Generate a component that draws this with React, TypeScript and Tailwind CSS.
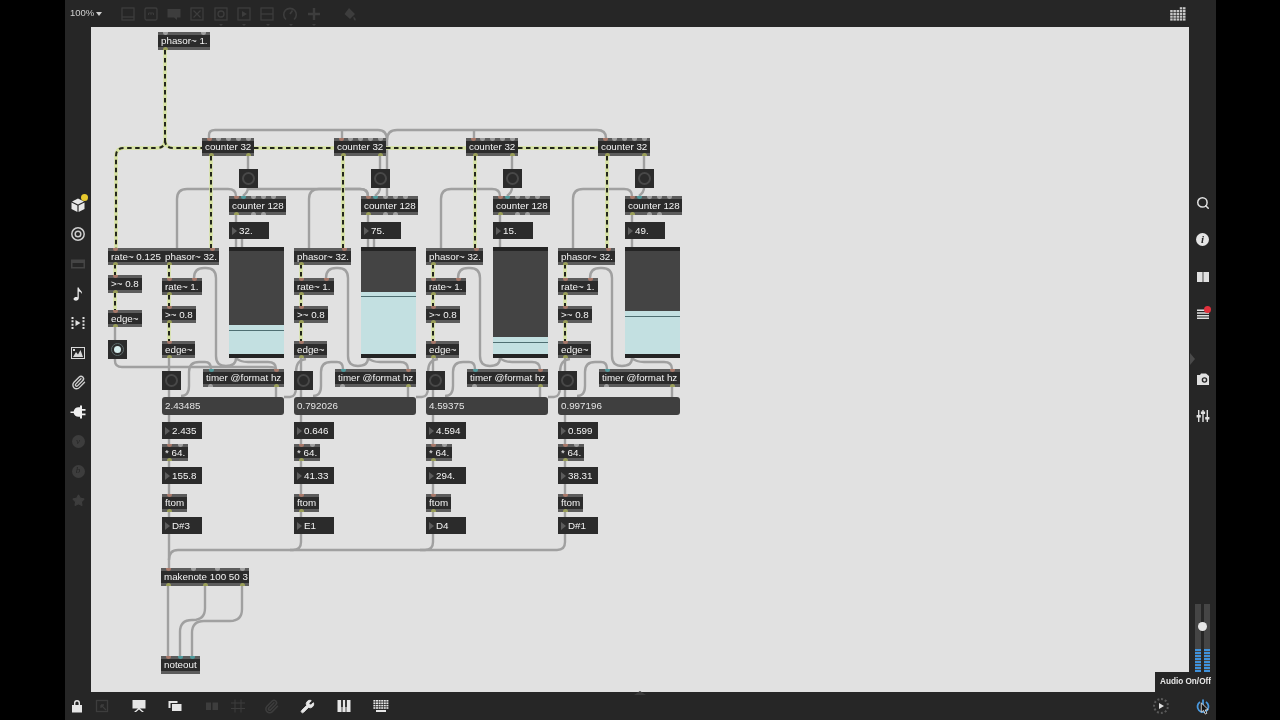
import { Paperclip, Search, Star, Wrench } from "lucide-react";
import type { ReactNode } from "react";

type Port = [number, string];

const IN = "#a9796a";
const OUT = "#9a9f58";
const TEAL = "#4f9a9c";
const BUMP = "#a0a0a0";

const COLS = [0, 1, 2, 3];
const STEP = 132;

// canvas starts at 91,27 in the page; data below is in page coordinates
const place = (x: number, y: number, w: number, h: number) => ({
  left: x - 91,
  top: y - 27,
  width: w,
  height: h,
});

function Obj({
  x,
  y,
  w,
  text,
  h = 18,
  top = [],
  bottom = [],
}: {
  x: number;
  y: number;
  w: number;
  text: string;
  h?: number;
  top?: Port[];
  bottom?: Port[];
}) {
  return (
    <div className="absolute flex flex-col bg-[#2b2b2b]" style={place(x, y, w, h)}>
      <div className="h-[3px] bg-[#5c5c5c]" />
      <div className="flex flex-1 items-center overflow-hidden whitespace-nowrap pl-[3px] text-[9.8px] leading-none text-[#f4f4f4]">
        {text}
      </div>
      <div className="h-[3px] bg-[#5c5c5c]" />
      {top.map(([px, c]) => (
        <span
          key={px}
          className="absolute top-0 h-[3px] w-[5px] rounded-b-full"
          style={{ left: px - 2, background: c }}
        />
      ))}
      {bottom.map(([px, c]) => (
        <span
          key={px}
          className="absolute bottom-0 h-[3px] w-[5px] rounded-t-full"
          style={{ left: px - 2, background: c }}
        />
      ))}
    </div>
  );
}

function NumBox({ x, y, w = 40, text }: { x: number; y: number; w?: number; text: string }) {
  return (
    <div
      className="absolute flex items-center gap-[2px] bg-[#2b2b2b] pl-[3px] text-[9.8px] leading-none text-[#f4f4f4]"
      style={place(x, y, w, 17)}
    >
      <span className="h-0 w-0 border-y-[4px] border-l-[5px] border-y-transparent border-l-[#5c5c5c]" />
      {text}
    </div>
  );
}

function Btn({ x, y, on = false }: { x: number; y: number; on?: boolean }) {
  return (
    <div className="absolute flex items-center justify-center bg-[#2b2b2b]" style={place(x, y, 19, 19)}>
      <div
        className={
          on
            ? "flex h-[13px] w-[13px] items-center justify-center rounded-full border border-[#5d6b6b]"
            : "h-[13px] w-[13px] rounded-full border-2 border-[#484848]"
        }
      >
        {on && <div className="h-[7px] w-[7px] rounded-full bg-[#d5ecec]" />}
      </div>
    </div>
  );
}

function Slider({ x, fill, line }: { x: number; fill: number; line: number }) {
  return (
    <div className="absolute flex flex-col bg-[#444444]" style={place(x, 247, 55, 111)}>
      <div className="h-[4px] bg-[#242424]" />
      <div className="flex-1" />
      <div className="relative bg-[#c3e0e1]" style={{ height: 354 - fill }}>
        <div className="absolute inset-x-0 h-px bg-[#4f6f72]" style={{ top: line - fill }} />
      </div>
      <div className="h-[4px] bg-[#242424]" />
    </div>
  );
}

const grayWires = [
  "M209 138 V135 Q209 130 215 130 H378 Q387 130 387 140 V196",
  "M342 138 V130",
  "M387 140 Q387 130 397 130 H597 Q606 130 606 138",
  "M474 138 V130",
  "M248 188 V189 H360 Q368 189 368 196",
  "M115 327 V340",
  "M115 359 V361 Q115 367 122 367 H268 Q276 367 276 369",
  "M169 534 V568",
  "M301 534 V542 Q301 550 293 550 H178 Q169 550 169 560",
  "M433 534 V542 Q433 550 425 550 H290",
  "M565 534 V542 Q565 550 557 550 H420",
  "M168 585 V656",
  "M205 585 V608 Q205 620 193 620 H192 Q180 620 180 632 V656",
  "M242 585 V609 Q242 621 230 621 H204 Q192 621 192 633 V656",
];

const columnGray = [
  "M177 248 V199 Q177 189 187 189 H228 Q236 189 236 196",
  "M248 156 V169",
  "M248 188 Q248 192 243 196",
  "M236 213 V247",
  "M194 278 Q194 268 204 268 H206 Q216 268 216 278 V356 Q216 366 226 366 Q236 366 236 358",
  "M236 358 Q240 362 248 362 H268 Q276 362 276 369",
  "M181 396 Q189 396 189 386 V372 Q189 362 199 362 H205 Q211 362 211 369",
  "M169 341 V534",
  "M276 387 V398",
];

const signalWires = [
  "M165 50 V140 Q165 148 157 148 H124 Q116 148 116 156 V248",
  "M165 140 Q165 148 173 148 H202",
  "M254 148 H334",
  "M386 148 H466",
  "M518 148 H598",
  "M115 264 V275",
  "M115 293 V310",
];

const columnSignal = ["M211 156 V248", "M169 264 V278", "M169 295 V306", "M169 323 V341"];

function Wires() {
  return (
    <svg className="absolute inset-0 h-full w-full" viewBox="91 27 1098 665" fill="none">
      <g stroke="#a0a0a0" strokeWidth="2.4">
        {grayWires.map((d) => (
          <path key={d} d={d} />
        ))}
        {COLS.map((i) => (
          <g key={i} transform={`translate(${i * STEP} 0)`}>
            {columnGray.map((d) => (
              <path key={d} d={d} />
            ))}
            {i < 2 && <path d="M242 239 V247" />}
            {i < 3 && <path d="M284 397 H290 Q296 397 296 387 V372 Q296 360 306 359" />}
          </g>
        ))}
      </g>
      {[
        { stroke: "#d6e2a0", width: 3.4, dash: undefined },
        { stroke: "#23261b", width: 2, dash: "4.5 3.5" },
      ].map((s) => (
        <g key={s.stroke} stroke={s.stroke} strokeWidth={s.width} strokeDasharray={s.dash}>
          {signalWires.map((d) => (
            <path key={d} d={d} />
          ))}
          {COLS.map((i) => (
            <g key={i} transform={`translate(${i * STEP} 0)`}>
              {columnSignal.map((d) => (
                <path key={d} d={d} />
              ))}
            </g>
          ))}
        </g>
      ))}
    </svg>
  );
}

const counter128Bumps: Port[] = [
  [7, IN],
  [14, TEAL],
  [24, BUMP],
  [34, BUMP],
  [44, BUMP],
];
const counter32Top: Port[] = [
  [7, IN],
  [16, BUMP],
  [26, BUMP],
  [36, BUMP],
  [46, BUMP],
];

const colData = [
  { nums: ["32.", "2.435", "155.8", "D#3"], msg: "2.43485", count: "32.", fill: 325, line: 330 },
  { nums: ["75.", "0.646", "41.33", "E1"], msg: "0.792026", count: "75.", fill: 292, line: 296 },
  { nums: ["15.", "4.594", "294.", "D4"], msg: "4.59375", count: "15.", fill: 337, line: 342 },
  { nums: ["49.", "0.599", "38.31", "D#1"], msg: "0.997196", count: "49.", fill: 311, line: 316 },
];

function Column({ i }: { i: number }) {
  const d = colData[i];
  const o = i * STEP;
  return (
    <>
      <Obj
        x={202 + o}
        y={138}
        w={52}
        text="counter 32"
        top={counter32Top}
        bottom={[
          [9, OUT],
          [46, OUT],
        ]}
      />
      <Btn x={239 + o} y={169} />
      <Obj
        x={229 + o}
        y={196}
        w={57}
        h={19}
        text="counter 128"
        top={counter128Bumps}
        bottom={[
          [7, OUT],
          [24, BUMP],
          [34, BUMP],
        ]}
      />
      <NumBox x={229 + o} y={222} text={d.count} />
      <Slider x={229 + o} fill={d.fill} line={d.line} />
      <Obj x={162 + o} y={248} w={57} h={17} text="phasor~ 32." top={[[50, IN]]} bottom={[[7, OUT]]} />
      <Obj
        x={162 + o}
        y={278}
        w={40}
        h={17}
        text="rate~ 1."
        top={[
          [7, IN],
          [32, IN],
        ]}
        bottom={[[7, OUT]]}
      />
      <Obj x={162 + o} y={306} w={34} h={17} text=">~ 0.8" top={[[7, IN]]} bottom={[[7, OUT]]} />
      <Obj x={162 + o} y={341} w={33} h={17} text="edge~" top={[[7, IN]]} bottom={[[7, OUT]]} />
      <Btn x={162 + o} y={371} />
      <Obj
        x={203 + o}
        y={369}
        w={81}
        text="timer @format hz"
        top={[
          [8, TEAL],
          [73, IN],
        ]}
        bottom={[
          [7, BUMP],
          [73, OUT],
        ]}
      />
      <div
        className="absolute flex items-center rounded-[3px] bg-[#3f3f3f] pl-[3px] text-[9.8px] leading-none text-[#e4e4e4]"
        style={place(162 + o, 397, 122, 18)}
      >
        {d.msg}
      </div>
      <NumBox x={162 + o} y={422} text={d.nums[1]} />
      <Obj x={162 + o} y={444} w={26} h={17} text="* 64." top={[[7, IN], [18, BUMP]]} bottom={[[7, OUT]]} />
      <NumBox x={162 + o} y={467} text={d.nums[2]} />
      <Obj x={162 + o} y={494} w={25} text="ftom" top={[[7, IN]]} bottom={[[7, OUT]]} />
      <NumBox x={162 + o} y={517} text={d.nums[3]} />
    </>
  );
}

function Patch() {
  return (
    <div className="relative flex-1 overflow-hidden bg-[#e1e1e1] font-['Liberation_Sans',sans-serif]">
      <Wires />
      <Obj
        x={158}
        y={32}
        w={52}
        text="phasor~ 1."
        top={[
          [7, BUMP],
          [45, BUMP],
        ]}
        bottom={[[7, OUT]]}
      />
      <Obj x={108} y={248} w={54} h={17} text="rate~ 0.125" top={[[7, IN]]} bottom={[[7, OUT]]} />
      <Obj x={108} y={275} w={34} h={18} text=">~ 0.8" top={[[7, IN]]} bottom={[[7, OUT]]} />
      <Obj x={108} y={310} w={34} h={17} text="edge~" top={[[7, IN]]} bottom={[[7, OUT]]} />
      <Btn x={108} y={340} on />
      {COLS.map((i) => (
        <Column key={i} i={i} />
      ))}
      <Obj
        x={161}
        y={568}
        w={88}
        text="makenote 100 50 3"
        top={[
          [7, IN],
          [32, BUMP],
          [56, BUMP],
          [81, BUMP],
        ]}
        bottom={[
          [7, OUT],
          [44, OUT],
          [81, OUT],
        ]}
      />
      <Obj
        x={161}
        y={656}
        w={39}
        text="noteout"
        top={[
          [7, IN],
          [19, TEAL],
          [31, TEAL],
        ]}
      />
    </div>
  );
}

const Ico = ({ children, className = "" }: { children: ReactNode; className?: string }) => (
  <svg viewBox="0 0 16 16" className={`h-4 w-4 ${className}`} fill="currentColor">
    {children}
  </svg>
);

const dimStroke = { fill: "none", stroke: "currentColor", strokeWidth: 1.3 };

const topIcons = [
  <g {...dimStroke}>
    <rect x="2" y="2" width="12" height="12" />
    <path d="M2 11 H14" />
  </g>,
  <g {...dimStroke}>
    <rect x="2" y="2" width="12" height="12" rx="1.5" />
    <path d="M5.5 9 V7 M8 9 V7 M10.5 9 V7 M5.5 7 H10.5" strokeWidth="0.9" />
  </g>,
  <path d="M1.5 3 H14.5 V11.5 H11 V14 L8 11.5 H1.5 Z" />,
  <g {...dimStroke}>
    <rect x="2" y="2" width="12" height="12" />
    <path d="M4.5 4.5 L11.5 11.5 M11.5 4.5 L4.5 11.5" />
  </g>,
  <g {...dimStroke}>
    <rect x="2" y="2" width="12" height="12" />
    <circle cx="8" cy="8" r="3" />
  </g>,
  <g>
    <rect x="2" y="2" width="12" height="12" {...dimStroke} />
    <path d="M6 5 L11 8 L6 11 Z" />
  </g>,
  <g {...dimStroke}>
    <rect x="2" y="2" width="12" height="12" />
    <path d="M2 8 H14" />
  </g>,
  <g {...dimStroke} strokeWidth="1.6">
    <path d="M4 13.5 A6.3 6.3 0 1 1 12 13.5" />
    <path d="M8 8 L10.5 4.5" />
  </g>,
  <path d="M6.8 2 H9.2 V6.8 H14 V9.2 H9.2 V14 H6.8 V9.2 H2 V6.8 H6.8 Z" />,
];

function TopBar() {
  return (
    <div className="flex h-[27px] items-center bg-[#262626] pl-[5px] font-['Liberation_Sans',sans-serif]">
      <span className="w-[26px] text-[9.5px] text-[#d0d0d0]">100%</span>
      <span className="h-0 w-0 border-x-[3px] border-t-[4px] border-x-transparent border-t-[#d0d0d0]" />
      <div className="ml-[14px] flex text-[#3d3d3d]">
        {topIcons.map((icon, n) => (
          <div key={n} className="relative flex w-[23.25px] justify-center">
            <Ico>{icon}</Ico>
            {n >= 4 && n <= 8 && (
              <span className="absolute left-[10px] top-[18px] h-0 w-0 border-x-[2px] border-t-[2px] border-x-transparent border-t-[#3d3d3d]" />
            )}
          </div>
        ))}
      </div>
      <div className="ml-[17px] text-[#3d3d3d]">
        <Ico>
          <path d="M7 2 L13 8 L8 13 L2.5 8 Z M11.5 10.5 C13 12 14.5 13 13.5 14.5 C12.5 15 11 13 11.5 10.5 Z" />
        </Ico>
      </div>
      <div className="ml-auto mr-[30px] text-[#c8c8c8]">
        <svg viewBox="0 0 16 14" className="h-[14px] w-4" fill="currentColor">
          {[0, 1, 2, 3, 4].map((r) =>
            [0, 1, 2, 3, 4].map((c) =>
              r < 1 && c < 3 ? null : (
                <rect key={`${r}-${c}`} x={c * 3.2 + 0.2} y={r * 2.8 + 0.2} width="2.5" height="2.2" />
              ),
            ),
          )}
        </svg>
      </div>
    </div>
  );
}

const leftIcons = [
  <div className="relative text-[#e8e8e8]">
    <Ico>
      <path d="M8 1.5 L14 4.5 L8 7.5 L2 4.5 Z M1.5 5.5 L7.4 8.5 V15 L1.5 12 Z M14.5 5.5 L8.6 8.5 V15 L14.5 12 Z" />
    </Ico>
    <span className="absolute -right-[2px] -top-[3px] h-[7px] w-[7px] rounded-full bg-[#e8c92e]" />
  </div>,
  <div className="text-[#cfcfcf]">
    <Ico>
      <g {...dimStroke} strokeWidth="1.5">
        <circle cx="8" cy="8" r="6.2" />
        <circle cx="8" cy="8" r="2.8" />
      </g>
    </Ico>
  </div>,
  <div className="text-[#444444]">
    <Ico>
      <path d="M1 3.5 H15 V12.5 H1 Z M2.5 7 V11 H13.5 V7 Z" fillRule="evenodd" />
    </Ico>
  </div>,
  <div className="text-[#e8e8e8]">
    <Ico>
      <path d="M7.5 1.5 H8.8 C9 4 12.5 4.5 12 8 C11.3 6.5 10 5.8 8.8 5.6 V12 C8.8 14 6.8 15 5 14.6 C3.3 14.2 3 12.4 4.5 11.5 C5.5 10.9 6.6 10.9 7.5 11.3 Z" />
    </Ico>
  </div>,
  <div className="text-[#e0e0e0]">
    <Ico>
      <path d="M1.5 2 H3.5 V4 H1.5 Z M1.5 5.3 H3.5 V7.3 H1.5 Z M1.5 8.7 H3.5 V10.7 H1.5 Z M1.5 12 H3.5 V14 H1.5 Z M12.5 2 H14.5 V4 H12.5 Z M12.5 5.3 H14.5 V7.3 H12.5 Z M12.5 8.7 H14.5 V10.7 H12.5 Z M12.5 12 H14.5 V14 H12.5 Z M5.5 5 L10.5 8 L5.5 11 Z" />
    </Ico>
  </div>,
  <div className="text-[#d8d8d8]">
    <Ico>
      <path
        d="M1 2 H15 V14 H1 Z M2 3 V13 H14 V3 Z"
        fillRule="evenodd"
      />
      <path d="M3 12 L6 7 L8 9.5 L10.5 5 L13 12 Z M3 4 H5 V6 H3 Z" />
    </Ico>
  </div>,
  <div className="text-[#d0d0d0]">
    <Paperclip size={15} strokeWidth={2.2} />
  </div>,
  <div className="text-[#f0f0f0]">
    <Ico>
      <path d="M0.5 7.4 H3.6 C4.2 4.8 6 3.2 8.5 3.2 H10 V1.5 H12 V5 H15.5 V6.8 H12 V9.4 H15.5 V11.2 H12 V14.5 H10 V12.8 H8.5 C6 12.8 4.2 11.2 3.6 9 H0.5 Z" />
    </Ico>
  </div>,
  <div className="flex h-[13px] w-[13px] items-center justify-center rounded-full bg-[#3d3d3d] font-['Liberation_Serif',serif] text-[9px] italic text-[#262626]">
    v
  </div>,
  <div className="flex h-[13px] w-[13px] items-center justify-center rounded-full bg-[#3d3d3d] font-['Liberation_Serif',serif] text-[9px] italic text-[#262626]">
    b
  </div>,
  <Star size={13} fill="#3d3d3d" stroke="#3d3d3d" />,
];

function LeftBar() {
  return (
    <div className="flex w-[26px] flex-col items-center bg-[#262626] pt-[163px]">
      {leftIcons.map((icon, n) => (
        <div key={n} className="flex h-[29.6px] items-center justify-center">
          {icon}
        </div>
      ))}
    </div>
  );
}

function RightBar() {
  const row = "flex h-[37px] items-center justify-center text-[#e0e0e0]";
  return (
    <div className="flex w-[27px] flex-col items-center bg-[#262626] pt-[157px]">
      <div className={row}>
        <Search size={14} strokeWidth={2.6} />
      </div>
      <div className={row}>
        <div className="flex h-[13px] w-[13px] items-center justify-center rounded-full bg-[#e4e4e4] font-['Liberation_Serif',serif] text-[11px] font-bold italic text-[#262626]">
          i
        </div>
      </div>
      <div className={row}>
        <Ico>
          <path d="M2 3 H7.6 V13 H2 Z M8.4 3 H14 V13 H8.4 Z" />
        </Ico>
      </div>
      <div className={`${row} relative`}>
        <Ico>
          <path d="M2 3.5 H14 V5 H2 Z M2 6.2 H14 V7.7 H2 Z M2 8.9 H14 V10.4 H2 Z M2 11.6 H14 V13.1 H2 Z" />
        </Ico>
        <span className="absolute left-[9px] top-[11px] h-[7px] w-[7px] rounded-full bg-[#e2303c]" />
      </div>
      <div className={`${row} mt-[28px]`}>
        <Ico>
          <path
            d="M2 4 H5 L6 2.5 H11 L14 5 V14 H2 Z M9.5 6.2 A2.8 2.8 0 1 0 9.5 11.8 A2.8 2.8 0 1 0 9.5 6.2 Z"
            fillRule="evenodd"
          />
          <circle cx="9.5" cy="9" r="1.4" />
        </Ico>
      </div>
      <div className={`${row} h-[36px]`}>
        <Ico>
          <path d="M3 2 H4.4 V7 H5.8 V9.5 H4.4 V14 H3 V9.5 H1.6 V7 H3 Z M7.3 2 H8.7 V3.5 H10.1 V6 H8.7 V14 H7.3 V6 H5.9 V3.5 H7.3 Z M11.6 2 H13 V9 H14.4 V11.5 H13 V14 H11.6 V11.5 H10.2 V9 H11.6 Z" />
        </Ico>
      </div>
      <div className="flex-1" />
      <Meter />
    </div>
  );
}

function Meter() {
  const segs = [0, 1, 2, 3, 4, 5, 6, 7];
  return (
    <div className="relative mb-[20px] flex h-[68px] gap-[3px]">
      {[0, 1].map((c) => (
        <div key={c} className="flex w-[6px] flex-col bg-[#454545]">
          <div className="flex-1" />
          <div className="flex flex-col gap-px">
            {segs.map((s) => (
              <div key={s} className="h-[2px] bg-[#3f92dc]" />
            ))}
          </div>
        </div>
      ))}
      <span className="absolute left-[3px] top-[18px] h-[9px] w-[9px] rounded-full bg-[#e6e6e6]" />
    </div>
  );
}

function BottomBar() {
  const lit = "text-[#e6e6e6]";
  const dim = "text-[#3d3d3d]";
  return (
    <div className="flex h-[28px] items-center bg-[#262626] pl-1">
      <div className={lit}>
        <Ico>
          <path
            d="M5 7 V5 A3 3 0 0 1 11 5 V7 H13 V14.5 H3 V7 Z M6.4 7 H9.6 V5 A1.6 1.6 0 0 0 6.4 5 Z"
            fillRule="evenodd"
          />
        </Ico>
      </div>
      <div className={`ml-[9px] ${dim}`}>
        <Ico>
          <g {...dimStroke}>
            <rect x="2.5" y="2.5" width="11" height="11" />
            <path d="M7 7 L12 12 M7 7 H10 M7 7 V10" />
          </g>
        </Ico>
      </div>
      <div className={`ml-[21px] ${lit}`}>
        <Ico>
          <path d="M1.5 2 H14.5 V10.5 H9 L13 14 H11 L8 11.5 L5 14 H3 L7 10.5 H1.5 Z" />
        </Ico>
      </div>
      <div className={`ml-[20px] ${lit}`}>
        <Ico>
          <path d="M1.5 3 H10.5 V5 H3.5 V10 H1.5 Z M5 6 H14.5 V13 H5 Z" />
        </Ico>
      </div>
      <div className={`ml-[21px] ${dim}`}>
        <Ico>
          <path d="M2 4.5 H7 V12 H2 Z M8.5 4.5 H14 V12 H8.5 Z" />
        </Ico>
      </div>
      <div className={`ml-[10px] ${dim}`}>
        <Ico>
          <path d="M1 5 H15 M1 10.5 H15 M5 1.5 V14.5 M11 1.5 V14.5" {...dimStroke} strokeWidth="1" />
        </Ico>
      </div>
      <div className={`ml-[18px] ${dim}`}>
        <Paperclip size={15} strokeWidth={2.4} />
      </div>
      <div className={`ml-[21px] ${lit}`}>
        <Wrench size={15} fill="currentColor" strokeWidth={1.5} />
      </div>
      <div className={`ml-[21px] ${lit}`}>
        <Ico>
          <path d="M1.5 2 H14.5 V14 H1.5 Z" />
          <path d="M5.1 2 H6.9 V9 H6.4 V14 H5.6 V9 H5.1 Z M9.1 2 H10.9 V9 H10.4 V14 H9.6 V9 H9.1 Z" fill="#262626" />
        </Ico>
      </div>
      <div className={`ml-[21px] ${lit}`}>
        <svg viewBox="0 0 16 14" className="h-[14px] w-4" fill="currentColor">
          {[0, 1, 2, 3].map((r) =>
            [0, 1, 2, 3, 4, 5].map((c) => (
              <rect key={`${r}-${c}`} x={c * 2.6 + 0.4} y={r * 2.4 + 1} width="2" height="1.6" />
            )),
          )}
          <rect x="3" y="11" width="10" height="2" />
        </svg>
      </div>
      <div className="ml-auto flex h-4 w-4 items-center justify-center rounded-full border-2 border-dotted border-[#5a5a5a]">
        <span className="ml-px h-0 w-0 border-y-[3px] border-l-[5px] border-y-transparent border-l-[#e0e0e0]" />
      </div>
      <div className="relative ml-[26px] mr-[5px] text-[#4a9ae0]">
        <Ico>
          <g fill="none" stroke="currentColor" strokeWidth="1.8">
            <path d="M5 4 A5.5 5.5 0 1 0 11 4" />
            <path d="M8 1.5 V8" />
          </g>
        </Ico>
        <svg viewBox="0 0 10 14" className="absolute left-[5px] top-[4px] h-[13px] w-[10px]">
          <path d="M1 1 V11 L3.5 9 L5.2 13 L7 12.2 L5.3 8.5 L8.5 8.2 Z" fill="#111" stroke="#fff" strokeWidth="0.8" />
        </svg>
      </div>
    </div>
  );
}

export default function App() {
  return (
    <div className="flex h-screen w-full justify-start bg-black blur-[0.3px]">
      <div className="ml-[65px] flex w-[1151px] flex-col">
        <TopBar />
        <div className="relative flex flex-1">
          <LeftBar />
          <Patch />
          <RightBar />
          <div className="absolute bottom-0 right-0 flex h-[20px] w-[61px] items-center justify-center bg-[#262626] font-['Liberation_Sans',sans-serif] text-[8.2px] font-bold text-[#e8e8e8]">
            Audio On/Off
          </div>
          <span className="absolute right-[21px] top-[326px] h-0 w-0 border-y-[6px] border-l-[5px] border-y-transparent border-l-[#4a4a4a]" />
          <span className="absolute bottom-[-3px] left-[569px] h-0 w-0 border-x-[6px] border-b-[4px] border-x-transparent border-b-[#3a3a3a]" />
        </div>
        <BottomBar />
      </div>
    </div>
  );
}
